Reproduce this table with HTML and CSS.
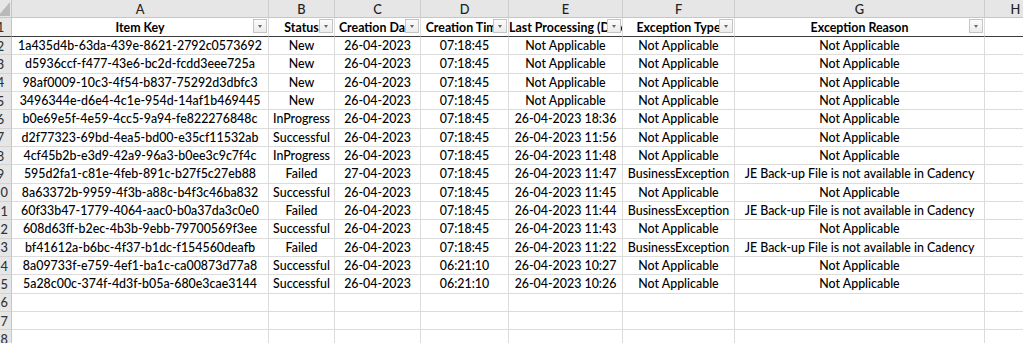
FILE: index.html
```html
<!DOCTYPE html>
<html>
<head>
<meta charset="utf-8">
<link rel="stylesheet" href="styles.css">
</head>
<body>
<div class="viewport">
  <div class="sheet">
    <div class="row">
      <div class="corner"><svg width="12" height="14" viewBox="0 0 12 14"><polygon points="12,0 12,14 0,14" fill="#b9b9b9"/></svg></div>
      <div class="colhead">A</div><div class="colhead">B</div><div class="colhead">C</div><div class="colhead">D</div><div class="colhead">E</div><div class="colhead">F</div><div class="colhead">G</div><div class="colhead">H</div>
    </div>
    <div class="row frozen">
      <div class="rowhead">1</div>
      <div class="cell hdr"><span class="txt">Item Key</span><span class="filter"></span></div>
      <div class="cell hdr"><span class="txt">Status</span><span class="filter"></span></div>
      <div class="cell hdr"><span class="txt">Creation Date</span><span class="filter"></span></div>
      <div class="cell hdr"><span class="txt">Creation Time</span><span class="filter"></span></div>
      <div class="cell hdr"><span class="txt">Last Processing (Date)</span><span class="filter"></span></div>
      <div class="cell hdr"><span class="txt">Exception Type</span><span class="filter"></span></div>
      <div class="cell hdr"><span class="txt">Exception Reason</span><span class="filter"></span></div>
      <div class="cell"></div>
    </div>
    <div class="row">
      <div class="rowhead">2</div>
      <div class="cell">1a435d4b-63da-439e-8621-2792c0573692</div><div class="cell">New</div><div class="cell">26-04-2023</div><div class="cell">07:18:45</div><div class="cell">Not Applicable</div><div class="cell">Not Applicable</div><div class="cell">Not Applicable</div><div class="cell"></div>
    </div>
    <div class="row">
      <div class="rowhead">3</div>
      <div class="cell">d5936ccf-f477-43e6-bc2d-fcdd3eee725a</div><div class="cell">New</div><div class="cell">26-04-2023</div><div class="cell">07:18:45</div><div class="cell">Not Applicable</div><div class="cell">Not Applicable</div><div class="cell">Not Applicable</div><div class="cell"></div>
    </div>
    <div class="row">
      <div class="rowhead">4</div>
      <div class="cell">98af0009-10c3-4f54-b837-75292d3dbfc3</div><div class="cell">New</div><div class="cell">26-04-2023</div><div class="cell">07:18:45</div><div class="cell">Not Applicable</div><div class="cell">Not Applicable</div><div class="cell">Not Applicable</div><div class="cell"></div>
    </div>
    <div class="row">
      <div class="rowhead">5</div>
      <div class="cell">3496344e-d6e4-4c1e-954d-14af1b469445</div><div class="cell">New</div><div class="cell">26-04-2023</div><div class="cell">07:18:45</div><div class="cell">Not Applicable</div><div class="cell">Not Applicable</div><div class="cell">Not Applicable</div><div class="cell"></div>
    </div>
    <div class="row">
      <div class="rowhead">6</div>
      <div class="cell">b0e69e5f-4e59-4cc5-9a94-fe822276848c</div><div class="cell">InProgress</div><div class="cell">26-04-2023</div><div class="cell">07:18:45</div><div class="cell">26-04-2023 18:36</div><div class="cell">Not Applicable</div><div class="cell">Not Applicable</div><div class="cell"></div>
    </div>
    <div class="row">
      <div class="rowhead">7</div>
      <div class="cell">d2f77323-69bd-4ea5-bd00-e35cf11532ab</div><div class="cell">Successful</div><div class="cell">26-04-2023</div><div class="cell">07:18:45</div><div class="cell">26-04-2023 11:56</div><div class="cell">Not Applicable</div><div class="cell">Not Applicable</div><div class="cell"></div>
    </div>
    <div class="row">
      <div class="rowhead">8</div>
      <div class="cell">4cf45b2b-e3d9-42a9-96a3-b0ee3c9c7f4c</div><div class="cell">InProgress</div><div class="cell">26-04-2023</div><div class="cell">07:18:45</div><div class="cell">26-04-2023 11:48</div><div class="cell">Not Applicable</div><div class="cell">Not Applicable</div><div class="cell"></div>
    </div>
    <div class="row">
      <div class="rowhead">9</div>
      <div class="cell">595d2fa1-c81e-4feb-891c-b27f5c27eb88</div><div class="cell">Failed</div><div class="cell">27-04-2023</div><div class="cell">07:18:45</div><div class="cell">26-04-2023 11:47</div><div class="cell">BusinessException</div><div class="cell">JE Back-up File is not available in Cadency</div><div class="cell"></div>
    </div>
    <div class="row">
      <div class="rowhead">10</div>
      <div class="cell">8a63372b-9959-4f3b-a88c-b4f3c46ba832</div><div class="cell">Successful</div><div class="cell">26-04-2023</div><div class="cell">07:18:45</div><div class="cell">26-04-2023 11:45</div><div class="cell">Not Applicable</div><div class="cell">Not Applicable</div><div class="cell"></div>
    </div>
    <div class="row">
      <div class="rowhead">11</div>
      <div class="cell">60f33b47-1779-4064-aac0-b0a37da3c0e0</div><div class="cell">Failed</div><div class="cell">26-04-2023</div><div class="cell">07:18:45</div><div class="cell">26-04-2023 11:44</div><div class="cell">BusinessException</div><div class="cell">JE Back-up File is not available in Cadency</div><div class="cell"></div>
    </div>
    <div class="row">
      <div class="rowhead">12</div>
      <div class="cell">608d63ff-b2ec-4b3b-9ebb-79700569f3ee</div><div class="cell">Successful</div><div class="cell">26-04-2023</div><div class="cell">07:18:45</div><div class="cell">26-04-2023 11:43</div><div class="cell">Not Applicable</div><div class="cell">Not Applicable</div><div class="cell"></div>
    </div>
    <div class="row">
      <div class="rowhead">13</div>
      <div class="cell">bf41612a-b6bc-4f37-b1dc-f154560deafb</div><div class="cell">Failed</div><div class="cell">26-04-2023</div><div class="cell">07:18:45</div><div class="cell">26-04-2023 11:22</div><div class="cell">BusinessException</div><div class="cell">JE Back-up File is not available in Cadency</div><div class="cell"></div>
    </div>
    <div class="row">
      <div class="rowhead">14</div>
      <div class="cell">8a09733f-e759-4ef1-ba1c-ca00873d77a8</div><div class="cell">Successful</div><div class="cell">26-04-2023</div><div class="cell">06:21:10</div><div class="cell">26-04-2023 10:27</div><div class="cell">Not Applicable</div><div class="cell">Not Applicable</div><div class="cell"></div>
    </div>
    <div class="row">
      <div class="rowhead">15</div>
      <div class="cell">5a28c00c-374f-4d3f-b05a-680e3cae3144</div><div class="cell">Successful</div><div class="cell">26-04-2023</div><div class="cell">06:21:10</div><div class="cell">26-04-2023 10:26</div><div class="cell">Not Applicable</div><div class="cell">Not Applicable</div><div class="cell"></div>
    </div>
    <div class="row">
      <div class="rowhead">16</div>
      <div class="cell"></div><div class="cell"></div><div class="cell"></div><div class="cell"></div><div class="cell"></div><div class="cell"></div><div class="cell"></div><div class="cell"></div>
    </div>
    <div class="row">
      <div class="rowhead">17</div>
      <div class="cell"></div><div class="cell"></div><div class="cell"></div><div class="cell"></div><div class="cell"></div><div class="cell"></div><div class="cell"></div><div class="cell"></div>
    </div>
    <div class="row">
      <div class="rowhead">18</div>
      <div class="cell"></div><div class="cell"></div><div class="cell"></div><div class="cell"></div><div class="cell"></div><div class="cell"></div><div class="cell"></div><div class="cell"></div>
    </div>
  </div>
</div>
</body>
</html>
```
FILE: styles.css
```css
html, body {
  margin: 0;
  padding: 0;
  background: #ffffff;
}
.viewport {
  width: 1023px;
  height: 343px;
  overflow: hidden;
}
.sheet {
  display: grid;
  width: max-content;
  margin-left: -10px;
  grid-template-columns: 22px 257px 66px 86px 88px 114px 112px 250px 62px;
  grid-template-rows: 18px 19px repeat(17, 18.333px);
  font-family: Lato, "Liberation Sans", sans-serif;
  font-size: 12.4px;
  font-weight: 500;
  color: #000;
}
.row {
  display: contents;
}
.corner,
.colhead,
.rowhead,
.cell {
  box-sizing: border-box;
  display: flex;
  align-items: center;
  justify-content: center;
  overflow: hidden;
  white-space: nowrap;
}
.corner {
  background: #e6e6e6;
  border-right: 1px solid #c6c6c6;
  border-bottom: 1px solid #c6c6c6;
  justify-content: flex-end;
  align-items: flex-end;
  padding: 0 1px 1px 0;
}
.colhead {
  background: #e6e6e6;
  border-right: 1px solid #cdcdcd;
  border-bottom: 1px solid #c6c6c6;
  color: #222;
  font-size: 12.8px;
}
.rowhead {
  background: #e6e6e6;
  border-right: 1px solid #c6c6c6;
  border-bottom: 1px solid #d2d2d2;
  color: #333;
  font-size: 12.8px;
}
.cell {
  position: relative;
  border-right: 1px solid #dcdcdc;
  border-bottom: 1px solid #dcdcdc;
}
.frozen .cell,
.frozen .rowhead {
  border-bottom: 1px solid #3c3c3c;
}
.hdr {
  font-weight: 700;
  justify-content: safe center;
}
.hdr .txt {
  flex: none;
}
.filter {
  position: absolute;
  right: 1px;
  top: 1px;
  width: 14px;
  height: 14px;
  box-sizing: border-box;
  border: 1px solid #c4c4c4;
  background: linear-gradient(#fbfbfb, #ececec);
}
.filter::after {
  content: "";
  position: absolute;
  left: 4px;
  top: 5px;
  border-left: 2.5px solid transparent;
  border-right: 2.5px solid transparent;
  border-top: 3px solid #6a6a6a;
}
```
